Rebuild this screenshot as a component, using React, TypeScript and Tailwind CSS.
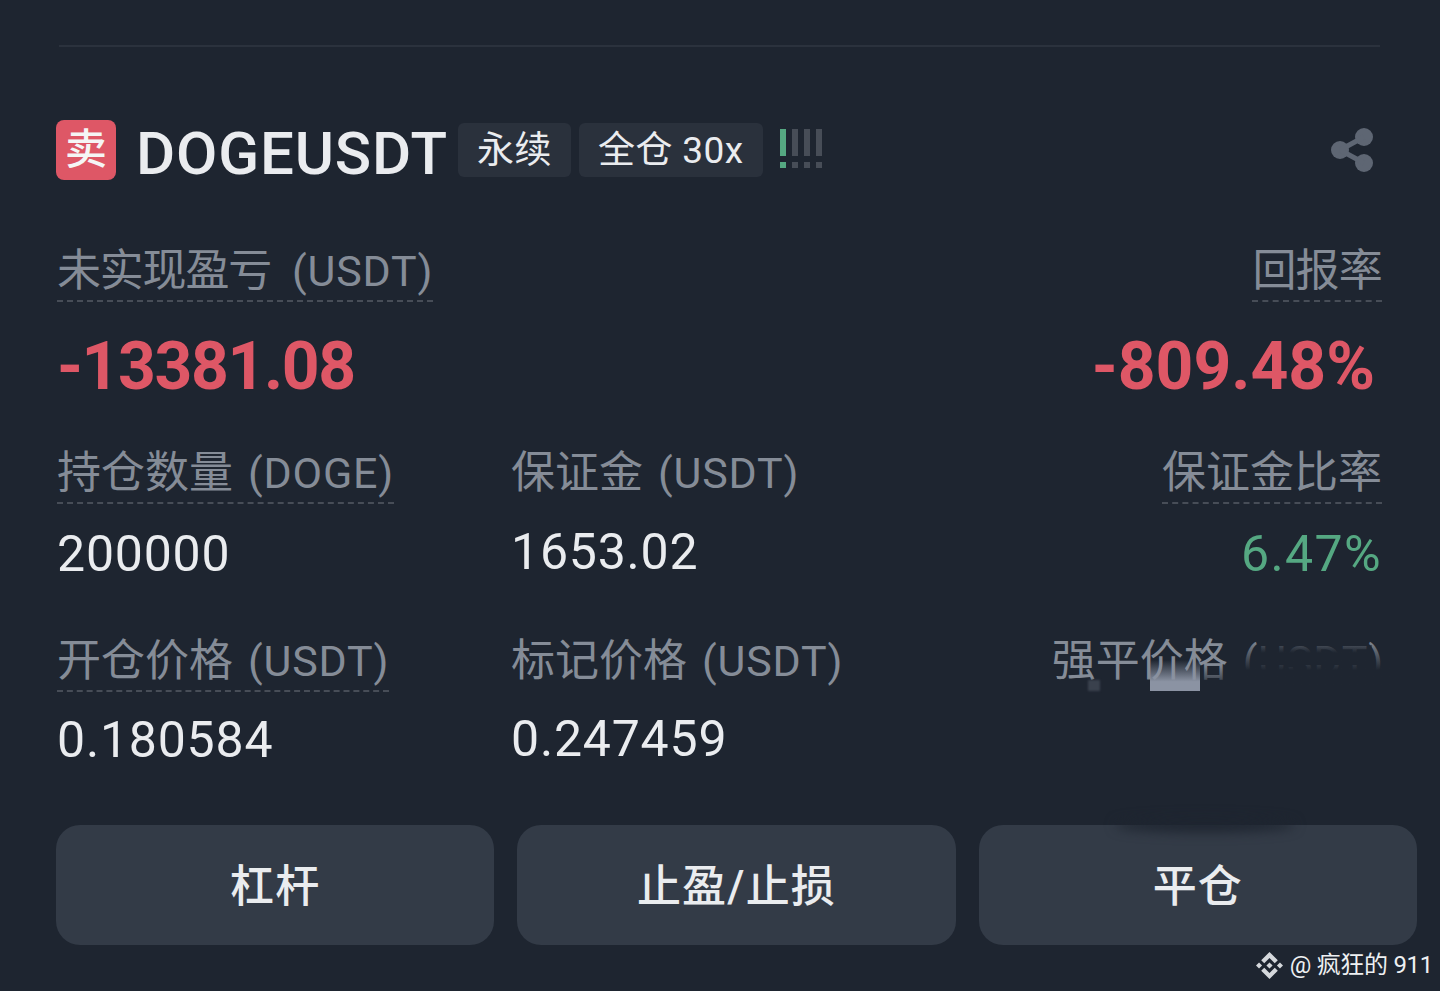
const Label = ({ children, dashed = true, className = "" }: { children: React.ReactNode; dashed?: boolean; className?: string }) => (
  <div className={`inline-block h-[57px] text-[44px] leading-[52px] whitespace-nowrap text-[#858c97] ${dashed ? "border-b-2 border-dashed border-[#474d57]" : ""} ${className}`}>
    {children}
  </div>
);

const Unit = ({ children }: { children: React.ReactNode }) => (
  <span className="ml-[15px] text-[43px] tracking-[0.8px]">{children}</span>
);

const Value = ({ children, className = "text-[#eaecef]" }: { children: React.ReactNode; className?: string }) => (
  <div className={`text-[50px] leading-[60px] ${className}`}>{children}</div>
);

const ActionButton = ({ children }: { children: React.ReactNode }) => (
  <button className="flex h-[120px] items-center justify-center rounded-[24px] bg-[#333b47] pt-[3px] text-[44px] font-medium tracking-[1.2px] text-[#eaecef]">
    {children}
  </button>
);

const ShareIcon = () => (
  <svg width="44" height="46" viewBox="0 0 44 46" fill="#5e6673">
    <circle cx="34" cy="10" r="9" />
    <circle cx="10" cy="23" r="9" />
    <circle cx="34" cy="36" r="9" />
    <path d="M10 23 34 10M10 23l24 13" stroke="#5e6673" strokeWidth="5" />
  </svg>
);

const RiskBars = () => (
  <div className="ml-[17px] flex gap-[6px]">
    {["#55a882", "#474d57", "#474d57", "#474d57"].map((color, i) => (
      <div key={i} className="flex w-[6px] flex-col gap-[6px]">
        <div className="h-[27px]" style={{ backgroundColor: color }} />
        <div className="h-[6px]" style={{ backgroundColor: color }} />
      </div>
    ))}
  </div>
);

const BinanceLogo = () => (
  <svg width="27" height="27" viewBox="0 0 126.61 126.61" fill="#d5d8dc">
    <path d="M38.73 53.2l24.59-24.58 24.6 24.6 14.3-14.31L63.32 0 24.42 38.9zM0 63.31l14.3-14.31 14.31 14.31-14.31 14.3zM38.73 73.41l24.59 24.59 24.6-24.6 14.31 14.29-38.9 38.91-38.91-38.88zM98 63.31l14.3-14.31 14.31 14.3-14.31 14.32zM77.83 63.3L63.32 48.78 52.59 59.51l-1.24 1.23-2.54 2.54 14.51 14.5 14.51-14.47z" />
  </svg>
);

export default function App() {
  return (
    <div className="relative h-[991px] w-[1440px] overflow-hidden bg-[#1e2530] font-['Roboto','Noto_Sans_CJK_SC',sans-serif]">
      <div className="pt-[45px] pr-[60px] pl-[59px]">
        <div className="h-[2px] bg-[#2b323d]" />
      </div>

      {/* Header */}
      <div className="mt-[72px] flex h-[62px] items-center pr-[66px] pl-[56px]">
        <div className="flex h-[60px] w-[60px] items-center justify-center rounded-[8px] bg-[#de5766] text-[42px] leading-none font-medium text-[#f5f5f5]">卖</div>
        <div className="mt-[8px] ml-[20px] text-[60px] leading-[66px] font-medium tracking-[0.85px] text-[#eaecef]">DOGEUSDT</div>
        <div className="ml-[10px] flex h-[54px] items-center rounded-[6px] bg-[#2a313c] px-[19px] pt-[2px] text-[37px] tracking-[0.5px] text-[#eaecef]">永续</div>
        <div className="ml-[8px] flex h-[54px] items-center rounded-[6px] bg-[#2a313c] px-[19px] pt-[2px] text-[37px] tracking-[0.4px] text-[#eaecef]">全仓 30x</div>
        <div className="mt-[-3px]"><RiskBars /></div>
        <div className="ml-auto"><ShareIcon /></div>
      </div>

      {/* PnL */}
      <div className="mt-[64px] flex items-start justify-between pr-[58px] pl-[57px]">
        <div>
          <Label className="tracking-[-1.2px]">未实现盈亏<span className="ml-[6px]"><Unit>(USDT)</Unit></span></Label>
          <div className="mt-[27px] text-[66px] leading-[76px] font-bold tracking-[-1.4px] text-[#de5766]">-13381.08</div>
        </div>
        <div className="flex flex-col items-end">
          <Label className="tracking-[-0.8px]">回报率</Label>
          <div className="mt-[27px] mr-[7px] text-[66px] leading-[76px] font-bold text-[#de5766]">-809.48%</div>
        </div>
      </div>

      {/* Position details */}
      <div className="mt-[42px] grid grid-cols-[454px_1fr_auto] pr-[58px] pl-[57px]">
        <div>
          <Label>持仓数量<Unit>(DOGE)</Unit></Label>
          <Value className="mt-[20px] tracking-[0.8px] text-[#eaecef]">200000</Value>
        </div>
        <div>
          <Label dashed={false}>保证金<Unit>(USDT)</Unit></Label>
          <Value className="mt-[18px] tracking-[0.8px] text-[#eaecef]">1653.02</Value>
        </div>
        <div className="flex flex-col items-end">
          <Label>保证金比率</Label>
          <Value className="mt-[20px] tracking-[1.4px] text-[#55a882]">6.47%</Value>
        </div>

        <div className="mt-[51px]">
          <Label>开仓价格<Unit>(USDT)</Unit></Label>
          <Value className="mt-[18px] tracking-[0.8px] text-[#eaecef]">0.180584</Value>
        </div>
        <div className="mt-[51px]">
          <Label dashed={false}>标记价格<Unit>(USDT)</Unit></Label>
          <Value className="mt-[17px] tracking-[0.8px] text-[#eaecef]">0.247459</Value>
        </div>
        <div className="mt-[51px] mr-[-2px] text-right">
          <Label dashed={false}>强平价格<Unit>(USDT)</Unit></Label>
        </div>
      </div>

      {/* Actions */}
      <div className="absolute top-[825px] right-[23px] left-[56px] grid grid-cols-3 gap-[23px]">
        <ActionButton>杠杆</ActionButton>
        <ActionButton>止盈/止损</ActionButton>
        <ActionButton>平仓</ActionButton>
      </div>

      {/* Smudged-out area over the liquidation price */}
      <div className="absolute top-[640px] left-[1240px] h-[50px] w-[155px] bg-gradient-to-b from-[#1e253000] to-[#1e2530] to-60%" />
      <div className="absolute top-[645px] left-[1260px] h-[20px] w-[112px] bg-gradient-to-b from-[#1e253080] to-[#1e2530] to-40%" />
      <div className="absolute top-[678px] left-[1040px] h-[14px] w-[110px] bg-gradient-to-b from-[#1e253000] to-[#1e2530]" />
      <div className="absolute top-[664px] left-[1200px] h-[24px] w-[38px] bg-gradient-to-b from-[#1e253000] to-[#1e2530]" />
      <div className="absolute top-[660px] left-[1150px] h-[31px] w-[50px] bg-gradient-to-b from-[#8b93a300] to-[#8b93a3] to-70%" />
      <div className="absolute top-[680px] left-[1088px] h-[11px] w-[12px] bg-[#3a414d] blur-[1px]" />
      <div className="absolute top-[818px] left-[1115px] h-[14px] w-[180px] rounded-[50%] bg-[#1e2530] blur-[6px]" />

      {/* Watermark */}
      <div className="absolute right-[7px] bottom-[11px] flex items-center gap-[7px] text-[24px] leading-[30px] tracking-[-0.3px] text-[#eef0f2]">
        <BinanceLogo />
        <span>@ 疯狂的 911</span>
      </div>
    </div>
  );
}
